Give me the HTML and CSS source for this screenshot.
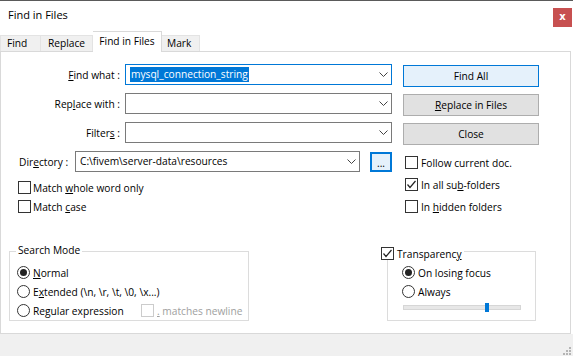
FILE: index.html
```html
<!DOCTYPE html>
<html>
<head>
<meta charset="utf-8">
<title>Find in Files</title>
<link rel="stylesheet" href="styles.css">
</head>
<body>
<div class="window">
  <div class="titlebar">
    <span class="title">Find in Files</span>
    <span class="close">x</span>
  </div>
  <div class="tabs">
    <span class="tab t-find">Find</span>
    <span class="tab t-replace">Replace</span>
    <span class="tab active">Find in Files</span>
    <span class="tab t-mark">Mark</span>
  </div>
  <div class="panel">
    <div class="top">
      <div class="fields">
        <div class="row">
          <span class="lbl"><u>F</u>ind what :</span>
          <div class="combo focus"><span class="sel">mysql_connection_string</span><svg class="chev" width="9" height="5" viewBox="0 0 9 5"><polyline points="0.5,0.5 4.5,4.5 8.5,0.5" fill="none" stroke="#444" stroke-width="1"/></svg></div>
        </div>
        <div class="row">
          <span class="lbl">Rep<u>l</u>ace with :</span>
          <div class="combo"><span class="val"></span><svg class="chev" width="9" height="5" viewBox="0 0 9 5"><polyline points="0.5,0.5 4.5,4.5 8.5,0.5" fill="none" stroke="#444" stroke-width="1"/></svg></div>
        </div>
        <div class="row">
          <span class="lbl">Filter<u>s</u> :</span>
          <div class="combo"><span class="val"></span><svg class="chev" width="9" height="5" viewBox="0 0 9 5"><polyline points="0.5,0.5 4.5,4.5 8.5,0.5" fill="none" stroke="#444" stroke-width="1"/></svg></div>
        </div>
        <div class="row dirrow">
          <span class="dirlbl">Dir<u>e</u>ctory :</span>
          <div class="combo dircombo"><span class="val">C:\fivem\server-data\resources</span><svg class="chev" width="9" height="5" viewBox="0 0 9 5"><polyline points="0.5,0.5 4.5,4.5 8.5,0.5" fill="none" stroke="#444" stroke-width="1"/></svg></div>
          <span class="dots">...</span>
        </div>
        <div class="checks leftchecks">
          <div class="check"><span class="cb"></span><span>Match <u>w</u>hole word only</span></div>
          <div class="check"><span class="cb"></span><span>Match <u>c</u>ase</span></div>
        </div>
      </div>
      <div class="side">
        <span class="btn primary">Find All</span>
        <span class="btn"><u>R</u>eplace in Files</span>
        <span class="btn">Close</span>
        <div class="checks sidechecks">
          <div class="check"><span class="cb"></span><span>Follow current doc.</span></div>
          <div class="check"><span class="cb on"><svg width="11" height="11" viewBox="0 0 11 11"><polyline points="1.5,5.5 4,8.5 9.5,2" fill="none" stroke="#222" stroke-width="1.2"/></svg></span><span>In all su<u>b</u>-folders</span></div>
          <div class="check"><span class="cb"></span><span>In <u>h</u>idden folders</span></div>
        </div>
      </div>
    </div>
    <div class="bottom">
      <div class="group search">
        <span class="gtitle">Search Mode</span>
        <div class="radio"><span class="rb on"></span><span><u>N</u>ormal</span></div>
        <div class="radio"><span class="rb"></span><span>E<u>x</u>tended (\n, \r, \t, \0, \x...)</span></div>
        <div class="radio"><span class="rb"></span><span class="regtext">Re<u>g</u>ular expression</span><span class="cb disabled"></span><span class="distext"><u>.</u> matches newline</span></div>
      </div>
      <div class="group trans">
        <div class="theader"><span class="cb on"><svg width="11" height="11" viewBox="0 0 11 11"><polyline points="1.5,5.5 4,8.5 9.5,2" fill="none" stroke="#222" stroke-width="1.2"/></svg></span><span>Transparenc<u>y</u></span></div>
        <div class="radio"><span class="rb on"></span><span>On losing focus</span></div>
        <div class="radio"><span class="rb"></span><span>Always</span></div>
        <div class="slider"><span class="track"></span><span class="thumb"></span></div>
      </div>
    </div>
  </div>
  <div class="footer">
    <svg class="grip" width="9" height="9" viewBox="0 0 9 9">
      <rect x="7" y="1" width="2" height="2" fill="#b4b4b4"/>
      <rect x="4" y="4" width="2" height="2" fill="#b4b4b4"/>
      <rect x="7" y="4" width="2" height="2" fill="#b4b4b4"/>
      <rect x="1" y="7" width="2" height="2" fill="#b4b4b4"/>
      <rect x="4" y="7" width="2" height="2" fill="#b4b4b4"/>
      <rect x="7" y="7" width="2" height="2" fill="#b4b4b4"/>
    </svg>
  </div>
</div>
</body>
</html>
```
FILE: styles.css
```css
* { box-sizing: border-box; margin: 0; padding: 0; }
html, body { width: 573px; height: 356px; overflow: hidden; }
body {
  background: #fff;
  font-family: "Open Sans", "Noto Sans", sans-serif;
  font-size: 10.2px;
  color: #000;
}
u { text-decoration: underline; text-underline-offset: 1px; }

.window {
  width: 573px;
  height: 356px;
  border-top: 1px solid #5a5a5a;
  display: flex;
  flex-direction: column;
}

.titlebar {
  height: 27px;
  display: flex;
  justify-content: space-between;
  align-items: flex-start;
  padding-left: 8px;
  padding-right: 1px;
}
.title {
  font-size: 11px;
  line-height: 14px;
  margin-top: 7px;
}
.close {
  width: 19px;
  height: 19px;
  margin-top: 7px;
  background: #c75050;
  color: #fff;
  font-family: "DejaVu Sans", sans-serif;
  font-weight: bold;
  font-size: 10px;
  line-height: 17px;
  text-align: center;
}

.tabs {
  height: 23px;
  display: flex;
  align-items: flex-end;
  position: relative;
  z-index: 2;
}
.tab {
  height: 16px;
  background: #f0f0f0;
  border: 1px solid #e3e3e3;
  border-bottom: none;
  line-height: 15px;
  text-align: left;
}
.t-find { width: 41px; padding-left: 6px; }
.t-replace { width: 52px; border-left: none; padding-left: 7px; }
.tab.active {
  width: 69px;
  height: 21px;
  margin-bottom: -1px;
  background: #fff;
  border-color: #d9d9d9;
  border-left: none;
  line-height: 19px;
  text-align: center;
}
.t-mark { width: 38px; border-left: none; padding-left: 5px; }

.panel {
  width: 571px;
  height: 283px;
  border: 1px solid #d9d9d9;
  padding-top: 12px;
}

.top {
  height: 187px;
  display: flex;
}
.fields {
  width: 391px;
  display: flex;
  flex-direction: column;
  gap: 8px;
}
.row {
  display: flex;
  align-items: center;
  height: 21px;
}
.lbl {
  width: 119px;
  text-align: right;
  margin-right: 5px;
}
.combo {
  width: 267px;
  height: 21px;
  border: 1px solid #7a7a7a;
  display: flex;
  align-items: center;
  justify-content: space-between;
  padding-left: 4px;
  padding-right: 3px;
  background: #fff;
}
.combo.focus { border-color: #0078d7; }
.sel {
  background: #0078d7;
  color: #fff;
  line-height: 15px;
  padding: 0 1px;
}
.val { line-height: 15px; }
.chev { flex: none; }
.dirlbl {
  width: 56px;
  margin-left: 18px;
}
.dircombo { width: 285px; }
.dots {
  width: 22px;
  height: 20px;
  margin-left: 10px;
  border: 2px solid #0078d7;
  background: #e5f1fb;
  text-align: center;
  line-height: 18px;
  align-self: flex-end;
}

.checks {
  display: flex;
  flex-direction: column;
}
.check {
  display: flex;
  align-items: center;
  height: 13px;
  white-space: nowrap;
}
.cb {
  width: 13px;
  height: 13px;
  border: 1px solid #333;
  background: #fff;
  flex: none;
  display: flex;
  align-items: center;
  justify-content: center;
}
.cb.disabled { border-color: #cccccc; }
.check .cb { margin-right: 2px; }
.leftchecks {
  margin-top: 1px;
  margin-left: 17px;
  gap: 6px;
}

.side {
  width: 136px;
  margin-left: 11px;
  display: flex;
  flex-direction: column;
  gap: 7px;
  padding-top: 1px;
}
.btn {
  height: 22px;
  border: 1px solid #adadad;
  background: #e1e1e1;
  text-align: center;
  line-height: 20px;
}
.btn.primary {
  border-color: #0078d7;
  background: #e5f1fb;
}
.sidechecks {
  margin-top: 4px;
  margin-left: 2px;
  gap: 9px;
}
.sidechecks .cb { margin-right: 3px; }

.bottom {
  display: flex;
  align-items: flex-start;
  padding-left: 8px;
}
.group {
  position: relative;
  height: 70px;
  border: 1px solid #dcdcdc;
  display: flex;
  flex-direction: column;
  gap: 6px;
  padding-top: 14px;
}
.search {
  width: 240px;
  padding-left: 7px;
}
.gtitle {
  position: absolute;
  left: 6px;
  top: -9px;
  background: #fff;
  padding: 0 2px;
  line-height: 15px;
}
.trans {
  width: 149px;
  margin-left: 138px;
  padding-left: 14px;
}
.theader {
  position: absolute;
  left: -7px;
  top: -5px;
  display: flex;
  align-items: center;
  gap: 3px;
  height: 13px;
  background: #fff;
  padding-right: 2px;
  white-space: nowrap;
}
.radio {
  display: flex;
  align-items: center;
  height: 13px;
  white-space: nowrap;
}
.rb {
  width: 13px;
  height: 13px;
  border: 1px solid #333;
  border-radius: 50%;
  margin-right: 3px;
  flex: none;
  display: flex;
  align-items: center;
  justify-content: center;
}
.rb.on::after {
  content: "";
  width: 7px;
  height: 7px;
  border-radius: 50%;
  background: #222;
}
.regtext { width: 108px; }
.distext { color: #a0a0a0; margin-left: 3px; }

.slider {
  position: relative;
  width: 118px;
  height: 9px;
  margin-left: 1px;
  margin-top: -1px;
  display: flex;
  align-items: center;
}
.track {
  width: 118px;
  height: 5px;
  background: #e7e7e7;
  border: 1px solid #d6d6d6;
}
.thumb {
  position: absolute;
  left: 82px;
  top: 0;
  width: 4px;
  height: 9px;
  background: #0078d7;
}

.footer {
  flex: 1;
  background: #f0f0f0;
  display: flex;
  justify-content: flex-end;
  align-items: flex-end;
  padding: 0 2px 1px 0;
}
```
